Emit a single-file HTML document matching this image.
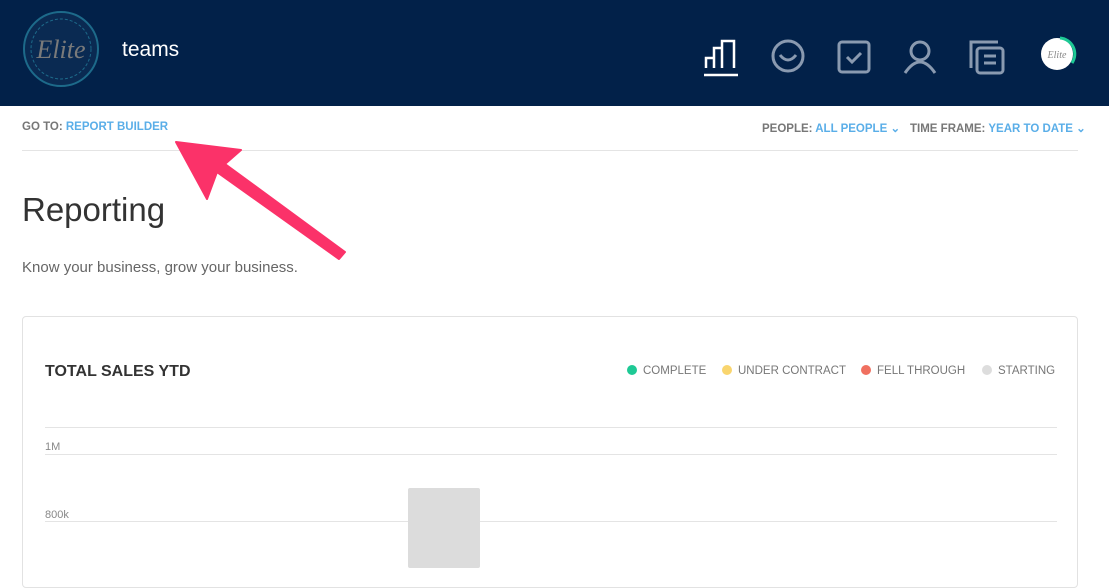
<!DOCTYPE html>
<html><head><style>
body{margin:0;width:1109px;height:565px;overflow:hidden;background:#fff;font-family:"Liberation Sans",sans-serif;position:relative}
.hdr{position:absolute;left:0;top:0;width:1109px;height:106px;background:#022149}
.t{position:absolute;white-space:nowrap}
.sm{font-size:11.5px;font-weight:bold;color:#777;top:121px}
.bl{color:#5aaee8}
.card{position:absolute;left:22px;top:316px;width:1054px;height:270px;border:1px solid #e2e2e2;border-radius:4px}
.gl{position:absolute;left:45px;width:1012px;height:1px;background:#e4e4e4}
.lg{position:absolute;top:365px;font-size:11.5px;color:#777}
.dot{display:inline-block;width:10px;height:10px;border-radius:50%;margin-right:6px;vertical-align:-1px}
</style></head><body>
<div class="hdr">
<svg width="1109" height="106" style="position:absolute;left:0;top:0">
<circle cx="61" cy="49" r="37" fill="#0a2a52" stroke="#1d6a8a" stroke-width="2"/>
<circle cx="61" cy="49" r="30" fill="none" stroke="#1d6a8a" stroke-width="1" stroke-dasharray="3 2"/>
<text x="61" y="58" font-family="Liberation Serif" font-style="italic" font-size="26" fill="#7a7a7a" text-anchor="middle">Elite</text>
<g fill="none" stroke="#fff" stroke-width="2.5">
<path d="M706 68V58h8v10M714 58V48h8v20M722 48V41h12v27"/>
<path d="M704 75h34"/>
</g>
<g fill="none" stroke="#8a9ab0" stroke-width="3">
<circle cx="788" cy="56" r="15"/>
<path d="M780 55q8 10 16 0"/>
<rect x="839" y="42" width="30" height="30" rx="3"/>
<path d="M847 57l5 5 9-9"/>
<circle cx="920" cy="51" r="9"/>
<path d="M905 73q15-22 30 0"/>
<path d="M971 68V42h27"/>
<rect x="977" y="48" width="26" height="25" rx="3"/>
<path d="M984 56h12M984 63h12"/>
</g>
<circle cx="1057" cy="54" r="16" fill="#fff"/>
<path d="M1060 38a16 16 0 0 1 12 25" fill="none" stroke="#1ec995" stroke-width="3"/>
<text x="1057" y="58" font-family="Liberation Serif" font-style="italic" font-size="10" fill="#888" text-anchor="middle">Elite</text>
</svg>
<div class="t" style="left:122px;top:38px;font-size:21px;color:#fff">teams</div>
</div>
<div class="t sm" style="left:22px">GO TO: <span class="bl">REPORT BUILDER</span></div>
<div class="t sm" style="left:762px">PEOPLE: <span class="bl">ALL PEOPLE ⌄</span></div>
<div class="t sm" style="left:910px">TIME FRAME: <span class="bl">YEAR TO DATE ⌄</span></div>
<div style="position:absolute;left:22px;top:150px;width:1056px;height:1px;background:#e4e4e4"></div>
<div class="t" style="left:22px;top:191px;font-size:33px;color:#333">Reporting</div>
<div class="t" style="left:22px;top:259px;font-size:15px;color:#666">Know your business, grow your business.</div>
<div class="card"></div>
<div class="t" style="left:45px;top:363px;font-size:16px;font-weight:bold;color:#333">TOTAL SALES YTD</div>
<div class="lg" style="left:627px"><span class="dot" style="background:#1ec995"></span>COMPLETE</div>
<div class="lg" style="left:722px"><span class="dot" style="background:#f9d56e"></span>UNDER CONTRACT</div>
<div class="lg" style="left:861px"><span class="dot" style="background:#f07060"></span>FELL THROUGH</div>
<div class="lg" style="left:982px"><span class="dot" style="background:#ddd"></span>STARTING</div>
<div class="gl" style="top:427px"></div>
<div class="gl" style="top:454px"></div>
<div class="gl" style="top:521px"></div>
<div class="t" style="left:45px;top:441px;font-size:11px;color:#888">1M</div>
<div class="t" style="left:45px;top:509px;font-size:11px;color:#888">800k</div>
<div style="position:absolute;left:408px;top:488px;width:72px;height:80px;background:#dcdcdc;border-radius:2px"></div>
<svg width="1109" height="565" style="position:absolute;left:0;top:0">
<path d="M176 142L241 150 225 164 345 252 339 259 217 172 207 199Z" fill="#fb3269" stroke="#fb3269" stroke-linejoin="round" stroke-width="2"/>
</svg>
</body></html>
